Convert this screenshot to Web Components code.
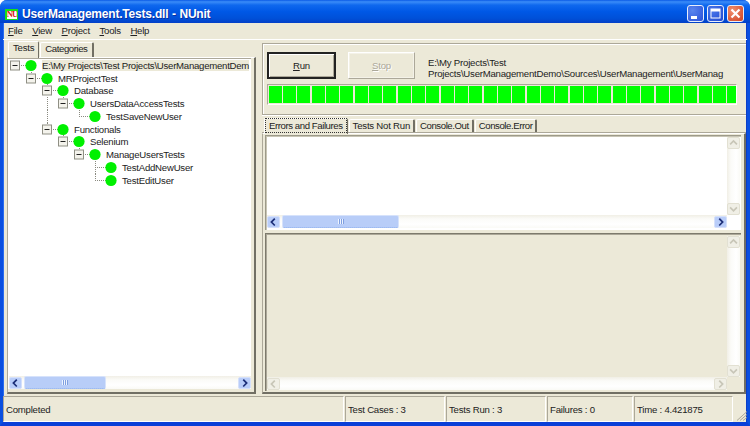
<!DOCTYPE html>
<html><head><meta charset="utf-8"><title>NUnit</title>
<style>
html,body{margin:0;padding:0;background:#fff}
body{width:750px;height:426px;overflow:hidden;font:9.6px "Liberation Sans",Arial,sans-serif;letter-spacing:-.22px;color:#222}
</style></head><body>
<x-window>
  <x-titlebar slot="title">UserManagement.Tests.dll - NUnit</x-titlebar>
  <x-menubar slot="menu">
    <x-menu key="F" rest="ile"></x-menu><x-menu key="V" rest="iew"></x-menu><x-menu key="P" rest="roject"></x-menu><x-menu key="T" rest="ools"></x-menu><x-menu key="H" rest="elp"></x-menu>
  </x-menubar>
  <x-tree-pane slot="left"></x-tree-pane>
  <x-run-pane slot="right"></x-run-pane>
  <x-statusbar slot="status"></x-statusbar>
</x-window>
<script>
function el(name, css, html){
  customElements.define(name, class extends HTMLElement{
    constructor(){super();const r=this.attachShadow({mode:'open'});r.innerHTML='<style>'+css+'</style>'+(typeof html==='function'?html(this):html);}
  });
}
el('x-window',`
:host{display:flex;flex-direction:column;width:750px;height:426px;box-sizing:border-box;background:#ece9d8;border-left:3px solid #0a4fe0;border-right:3px solid #0a4fe0;border-bottom:4px solid #0a3fd8;border-radius:7px 7px 0 0;box-shadow:inset 1px 0 #2a6cf0, inset -1px 0 #0b3ec8}
.main{flex:1;display:flex;min-height:0;padding:0 1px 1px 4px;gap:6px}
`,`<slot name="title"></slot><slot name="menu"></slot><div class="main"><slot name="left"></slot><slot name="right"></slot></div><slot name="status"></slot>`);

el('x-titlebar',`
:host{display:flex;align-items:center;height:23px;margin:0 -3px;padding:0 6px 0 5px;box-sizing:border-box;border-radius:7px 7px 0 0;background:linear-gradient(#0a5ae6 0,#3a8cf8 8%,#0f68ee 22%,#0058e6 50%,#0050d8 80%,#0340c8 100%);color:#fff}
.ico{width:13px;height:11px;margin-top:5px;box-sizing:border-box;background:#fff;border:solid #18e018;border-width:2px 1px 1px 2px;margin-right:4px;display:flex;align-items:center;justify-content:center;font:bold 8.5px/1 "Liberation Serif",serif;color:#d81818;letter-spacing:-1px;overflow:hidden}
.t{flex:1;margin-top:4px;font:bold 12px/1 "Liberation Sans",sans-serif;letter-spacing:-.2px;word-spacing:.5px;text-shadow:1px 1px 0 #0a2fa0;white-space:nowrap}
.b{width:17px;height:17px;margin:4px 0 0 3px;box-sizing:border-box;border:1px solid #e8eefc;border-radius:3px;display:block;flex:none}
.min{background:radial-gradient(circle at 30% 30%,#5a86ee,#2a50d8)}
.max{background:radial-gradient(circle at 30% 30%,#4a78ea,#2048d0)}
.cl{background:radial-gradient(circle at 30% 30%,#f09070,#d04020)}
`,`<span class="ico">NU</span><span class="t"><slot></slot></span>
<svg class="b min" viewBox="0 0 15 15"><rect x="3" y="10" width="6" height="3" fill="#fff"/></svg>
<svg class="b max" viewBox="0 0 15 15"><rect x="3" y="3" width="9" height="9" fill="none" stroke="#fff"/><rect x="3" y="3" width="9" height="2.5" fill="#fff"/></svg>
<svg class="b cl" viewBox="0 0 15 15"><path d="M3.5 3.5l8 8M11.5 3.5l-8 8" stroke="#fff" stroke-width="2.2"/></svg>`);

el('x-menubar',`
:host{display:flex;align-items:center;height:17px;box-sizing:border-box;padding:0 0 1px 5px;gap:9.6px;border-bottom:1px solid #fff}
`,`<slot></slot>`);

el('x-menu',`:host{display:inline-block}`,h=>`<u>${h.getAttribute('key')}</u>${h.getAttribute('rest')}`);

el('x-tab',`
:host{display:block;box-sizing:border-box;height:var(--h,14px);padding:0 var(--tp,4px);border:1px solid #a09c8c;border-bottom:0;border-left-color:#fff;border-top-color:#fff;border-right:2px solid #716f64;border-radius:2px 2px 0 0;white-space:nowrap;line-height:12px;background:#ece9d8}
:host([active]){height:var(--ah,16px);position:relative;z-index:1;border-right-width:1px;margin-bottom:-1px}
:host([focus]) span{display:inline-block;height:13px;line-height:13px;outline:1px dotted #333;padding:0 3px;margin:0 -2px}
:host([tight]){letter-spacing:-.42px}
`,`<span><slot></slot></span>`);

el('x-scroll',`
:host{display:flex;box-sizing:border-box;flex:none;background:linear-gradient(#f1efe6,#fbfbf8 30%,#fff 70%,#fafaf6)}
:host([dir-h]){flex-direction:row;height:13px;align-items:center}
:host([dir-v]){flex-direction:column;width:13px;height:100%;background:linear-gradient(90deg,#f1efe6,#fbfbf8 30%,#fff 70%,#fafaf6)}
.b{flex:none;width:13px;height:12px;box-sizing:border-box;border:1px solid #d5e0fb;border-radius:2px;background:#b9cdf9;display:block}
:host([off]) .b{background:#f0efe6;border-color:#e2e0d2}
.b path{fill:none;stroke:#1d2f78;stroke-width:2}
:host([off]) .b path{stroke:#c8c6b8}
.th{height:100%;box-sizing:border-box;border:1px solid #d6e2fb;border-radius:2px;background:#b8cdf8;margin-left:2px;display:flex;align-items:center;justify-content:center;border-bottom:1px dotted #8fb0ee}
.th i{display:block;width:6px;height:5px;background:repeating-linear-gradient(90deg,#eef4ff 0 1px,#7f9fe0 1px 2px)}
.sp{flex:1}
:host([off]) .th{display:none}
`,h=>{
 const v=h.hasAttribute('dir-v');
 const a=v?'M2.5 7.5l4-4 4 4':'M8 2l-4 4 4 4';
 const c=v?'M2.5 4l4 4 4-4':'M5 2l4 4-4 4';
 return `<svg class="b" viewBox="0 0 11 10"><path d="${a}" transform="scale(.85)"/></svg>`+
 (v?'':`<div class="th" style="width:${h.getAttribute('thumb')||0}px"><i></i></div>`)+
 `<div class="sp"></div><svg class="b" viewBox="0 0 11 10"><path d="${c}" transform="scale(.85)"/></svg>`;
});

el('x-node',`
:host{display:flex;align-items:center;height:12.75px;white-space:nowrap}
svg{flex:none;display:block;overflow:visible}
.l{padding-left:3px}
`,h=>{
 const lv=+h.getAttribute('lv');
 const exp=h.hasAttribute('exp');
 const base=7+16*lv;
 const W=base+16+8;
 let s='';
 const dot='stroke="#8a8a80" stroke-width="1" stroke-dasharray="1 1" fill="none"';
 (h.getAttribute('v')||'').split(';').filter(Boolean).forEach(p=>{
   const [x,y1,y2]=p.split(':').map(Number);
   s+=`<path d="M${x+.5} ${y1}V${y2}" ${dot}/>`;
 });
 s+=`<path d="M${base} 6.5H${base+16}" ${dot}/>`;
 if(exp) s+=`<rect x="${base-4.5}" y="2" width="9" height="9" fill="#f4f3ec" stroke="#8f8f84"/><path d="M${base-2.5} 6.5h5" stroke="#222"/>`;
 s+=`<circle cx="${base+16}" cy="6.5" r="5.6" fill="#00f000"/>`;
 return `<svg width="${W}" height="13" viewBox="0 0 ${W} 13">${s}</svg><span class="l"><slot></slot></span>`;
});

el('x-tree-pane',`
:host{display:flex;flex-direction:column;width:249px;flex:none}
.tabs{display:flex;align-items:flex-end;height:17px;padding-left:1px;gap:1px;--h:15px;--ah:17px}
.page{flex:1;display:flex;box-sizing:border-box;border:1px solid #fff;border-left-color:#aca899;border-right:2px solid #716f64;border-bottom:2px solid #716f64;padding:0 3px 3px 0;min-height:0}
.box{flex:1;min-width:0;display:flex;flex-direction:column;background:#fff;box-shadow:inset 0 1px #aca899}
.tree{flex:1;padding-top:1px;min-height:0;overflow:hidden}
x-scroll{margin-left:1px}
`,`<div class="tabs"><x-tab active>Tests</x-tab><x-tab tight>Categories</x-tab></div>
<div class="page"><div class="box"><div class="tree">
<x-node lv="0" exp><span style="background:#ece9d8;letter-spacing:-.25px">E:\\My Projects\\Test Projects\\UserManagementDem</span></x-node>
<x-node lv="1" exp v="23:0:2">MRProjectTest</x-node>
<x-node lv="2" exp v="39:0:2">Database</x-node>
<x-node lv="3" exp v="39:0:13;55:0:2">UsersDataAccessTests</x-node>
<x-node lv="4" v="39:0:13;71:0:7">TestSaveNewUser</x-node>
<x-node lv="2" exp v="39:0:2">Functionals</x-node>
<x-node lv="3" exp v="55:0:2">Selenium</x-node>
<x-node lv="4" exp v="71:0:2">ManageUsersTests</x-node>
<x-node lv="5" v="87:0:13">TestAddNewUser</x-node>
<x-node lv="5" v="87:0:7">TestEditUser</x-node>
</div><x-scroll dir-h thumb="82"></x-scroll></div></div>`);

el('x-run-pane',`
:host{display:flex;flex-direction:column;flex:1;min-width:0}
.top{height:72px;flex:none;margin-top:3px;box-sizing:border-box;border-top:1px solid #aca899;border-left:1px solid #aca899;border-bottom:1px solid #aca899;box-shadow:inset 1px 1px #fff, 0 1px #fff;padding:8px 8px 0 4px}
.row{display:flex;align-items:flex-start;height:32px}
button{font:inherit;letter-spacing:inherit;box-sizing:border-box;height:27px;background:#ece9d8;color:#222;padding:0;margin:0}
.run{width:69px;border:2px solid #222;box-shadow:inset 1px 1px #fff,inset -1px -1px #aca899}
.stop{width:67px;margin-left:12px;border:1px solid #fff;border-right-color:#aca899;border-bottom-color:#aca899;color:#aca899;text-shadow:1px 1px #fff;box-shadow:inset 0 0 0 1px #f4f2e8}
.path{margin-left:13px;line-height:11px;padding-top:4.5px;white-space:nowrap;width:310px}
.bar{height:21px;width:470px;box-sizing:border-box;border:1px solid #aca899;border-right-color:#fff;border-bottom-color:#fff;padding:1px;display:flex;overflow:hidden;background:#ece9d8}
.bar i{flex:none;width:13px;height:100%;margin-right:1px;background:#00ff00}
.bar i:nth-child(3n){margin-right:2px}
.tabs{display:flex;align-items:flex-end;height:17px;padding-left:2px;margin-top:1px;--h:14px;--ah:16px;--tp:3px;gap:1px}
.body{flex:1;display:flex;flex-direction:column;min-height:0;box-sizing:border-box;padding:1px 3px 1px 2px;gap:3px;border:1px solid #fff;border-left-color:#aca899;border-right:2px solid #716f64;border-bottom:2px solid #716f64;box-shadow:0 -1px #aca899}
.errs{height:95px;flex:none;display:flex;background:#fff;box-sizing:border-box;border:1px solid #9d9a8a;border-right:0;border-bottom:0;box-shadow:inset 1px 1px #c8c5b4}
.col{flex:1;min-width:0;display:flex;flex-direction:column;justify-content:flex-end;padding:0 0 2px 1px}
.vs{width:14px;flex:none;display:flex;padding:1px 1px 15px 0;box-sizing:border-box}
.stack{flex:1;min-height:0;display:flex;box-sizing:border-box;border:1px solid #7d7a6c;border-right:0;border-bottom:0;box-shadow:inset 1px 1px #aca899;background:#ece9d8}
.stack .col{padding-bottom:1px}
.stack .vs{padding:2px 1px 14px 0}
`,h=>`<div class="top"><div class="row"><button class="run"><u>R</u>un</button><button class="stop"><u>S</u>top</button>
<div class="path">E:\\My Projects\\Test<br>Projects\\UserManagementDemo\\Sources\\UserManagement\\UserManag</div></div>
<div class="bar">${'<i></i>'.repeat(33)}</div></div>
<div class="tabs"><x-tab active focus tight>Errors and Failures</x-tab><x-tab>Tests Not Run</x-tab><x-tab tight>Console.Out</x-tab><x-tab tight>Console.Error</x-tab></div>
<div class="body">
<div class="errs"><div class="col"><x-scroll dir-h thumb="117"></x-scroll></div><div class="vs"><x-scroll dir-v off></x-scroll></div></div>
<div class="stack"><div class="col"><x-scroll dir-h off></x-scroll></div><div class="vs"><x-scroll dir-v off></x-scroll></div></div>
</div>`);

el('x-statusbar',`
:host{display:flex;height:27px;box-sizing:border-box;padding-top:1px;margin:0 -1px 0 0;gap:1px}
div{box-sizing:border-box;flex:none;border:1px solid #aca899;border-right-color:#fff;border-bottom-color:#fff;padding:7px 0 0 2px;white-space:nowrap}
svg{flex:1;min-width:0}
`,`<div style="width:341px">Completed</div><div style="width:100px">Test Cases : 3</div><div style="width:100px">Tests Run : 3</div><div style="width:86px">Failures : 0</div><div style="width:99px">Time : 4.421875</div>
<svg viewBox="0 0 14 25"><path d="M13 15L3 24M13 18L6 24M13 21L9 24" stroke="#aca899" fill="none"/></svg>`);
</script>
</body></html>
